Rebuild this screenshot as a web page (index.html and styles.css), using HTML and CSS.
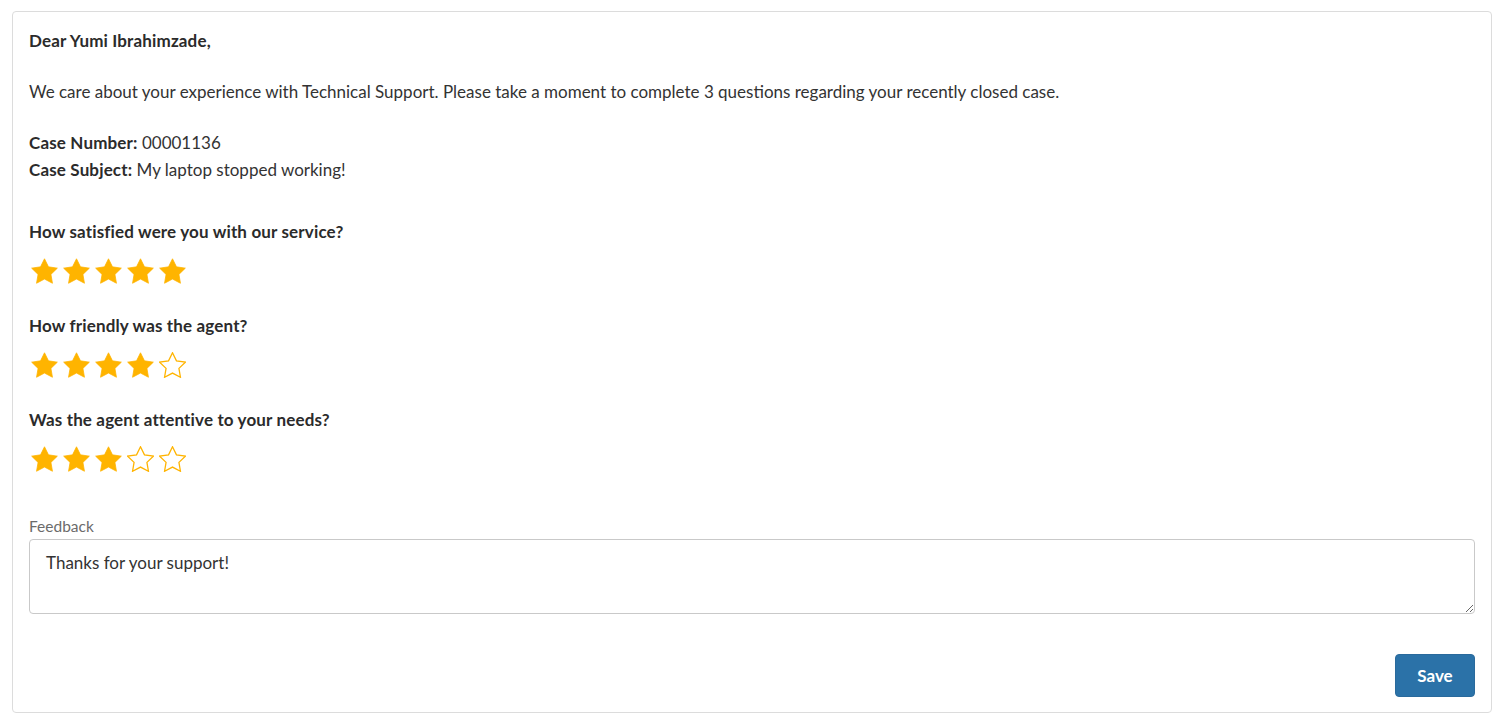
FILE: index.html
```html
<!DOCTYPE html>
<html lang="en">
<head>
<meta charset="utf-8">
<title>Survey</title>
<link rel="stylesheet" href="styles.css">
</head>
<body>
<div class="card">
  <p class="line greeting"><b>Dear Yumi Ibrahimzade,</b></p>
  <p class="line intro">We care about your experience with Technical Support. Please take a moment to complete 3 questions regarding your recently closed case.</p>
  <div class="case">
    <p class="line"><b>Case Number:</b> 00001136</p>
    <p class="line"><b>Case Subject:</b> My laptop stopped working!</p>
  </div>

  <div class="question first">
    <p class="line q"><b>How satisfied were you with our service?</b></p>
    <div class="stars">
      <svg class="star on" viewBox="1.5 1.5 21 20"><path d="M12 2l3.09 6.26L22 9.27l-5 4.87 1.18 6.88L12 17.770l-6.180 3.25L7 14.14 2 9.27l6.91-1.01L12 2z"/></svg>
      <svg class="star on" viewBox="1.5 1.5 21 20"><path d="M12 2l3.09 6.26L22 9.27l-5 4.87 1.18 6.88L12 17.77l-6.18 3.25L7 14.14 2 9.27l6.91-1.01L12 2z"/></svg>
      <svg class="star on" viewBox="1.5 1.5 21 20"><path d="M12 2l3.09 6.26L22 9.27l-5 4.87 1.18 6.88L12 17.77l-6.18 3.25L7 14.14 2 9.27l6.91-1.01L12 2z"/></svg>
      <svg class="star on" viewBox="1.5 1.5 21 20"><path d="M12 2l3.09 6.26L22 9.27l-5 4.87 1.18 6.88L12 17.77l-6.18 3.25L7 14.14 2 9.27l6.91-1.01L12 2z"/></svg>
      <svg class="star on" viewBox="1.5 1.5 21 20"><path d="M12 2l3.09 6.26L22 9.27l-5 4.87 1.18 6.88L12 17.77l-6.18 3.25L7 14.14 2 9.27l6.91-1.01L12 2z"/></svg>
    </div>
  </div>

  <div class="question">
    <p class="line q"><b>How friendly was the agent?</b></p>
    <div class="stars">
      <svg class="star on" viewBox="1.5 1.5 21 20"><path d="M12 2l3.09 6.26L22 9.27l-5 4.87 1.18 6.88L12 17.77l-6.18 3.25L7 14.14 2 9.27l6.91-1.01L12 2z"/></svg>
      <svg class="star on" viewBox="1.5 1.5 21 20"><path d="M12 2l3.09 6.26L22 9.27l-5 4.87 1.18 6.88L12 17.77l-6.18 3.25L7 14.14 2 9.27l6.91-1.01L12 2z"/></svg>
      <svg class="star on" viewBox="1.5 1.5 21 20"><path d="M12 2l3.09 6.26L22 9.27l-5 4.87 1.18 6.88L12 17.77l-6.18 3.25L7 14.14 2 9.27l6.91-1.01L12 2z"/></svg>
      <svg class="star on" viewBox="1.5 1.5 21 20"><path d="M12 2l3.09 6.26L22 9.27l-5 4.87 1.18 6.88L12 17.77l-6.18 3.25L7 14.14 2 9.27l6.91-1.01L12 2z"/></svg>
      <svg class="star off" viewBox="1.5 1.5 21 20"><path d="M12 2l3.09 6.26L22 9.27l-5 4.87 1.18 6.88L12 17.77l-6.18 3.25L7 14.14 2 9.27l6.91-1.01L12 2z"/></svg>
    </div>
  </div>

  <div class="question">
    <p class="line q"><b>Was the agent attentive to your needs?</b></p>
    <div class="stars">
      <svg class="star on" viewBox="1.5 1.5 21 20"><path d="M12 2l3.09 6.26L22 9.27l-5 4.87 1.18 6.88L12 17.77l-6.18 3.25L7 14.14 2 9.27l6.91-1.01L12 2z"/></svg>
      <svg class="star on" viewBox="1.5 1.5 21 20"><path d="M12 2l3.09 6.26L22 9.27l-5 4.87 1.18 6.88L12 17.77l-6.18 3.25L7 14.14 2 9.27l6.91-1.01L12 2z"/></svg>
      <svg class="star on" viewBox="1.5 1.5 21 20"><path d="M12 2l3.09 6.26L22 9.27l-5 4.87 1.18 6.88L12 17.77l-6.18 3.25L7 14.14 2 9.27l6.91-1.01L12 2z"/></svg>
      <svg class="star off" viewBox="1.5 1.5 21 20"><path d="M12 2l3.09 6.26L22 9.27l-5 4.87 1.18 6.88L12 17.77l-6.18 3.25L7 14.14 2 9.27l6.91-1.01L12 2z"/></svg>
      <svg class="star off" viewBox="1.5 1.5 21 20"><path d="M12 2l3.09 6.26L22 9.27l-5 4.87 1.18 6.88L12 17.77l-6.18 3.25L7 14.14 2 9.27l6.91-1.01L12 2z"/></svg>
    </div>
  </div>

  <div class="feedback">
    <label class="label" for="fb">Feedback</label>
    <textarea id="fb" class="textarea">Thanks for your support!</textarea>
  </div>

  <div class="actions">
    <button class="btn" type="button">Save</button>
  </div>
</div>
</body>
</html>
```

FILE: styles.css
```css
* { box-sizing: border-box; }
html, body { background: #fff; }
body {
  margin: 0;
  padding: 11px 8px 0 12px;
  font-family: Lato, "Open Sans", "Liberation Sans", sans-serif;
  font-size: 17px;
  color: #333333;
}
.card {
  width: 1480px;
  height: 702px;
  border: 1px solid #dcdcdc;
  border-radius: 4px;
  padding: 16px 16px 15px 16px;
  display: flex;
  flex-direction: column;
}
.line {
  margin: 0;
  line-height: 26px;
}
b { font-weight: 700; color: #2b2b2b; letter-spacing: 0.15px; }
.intro { margin-top: 25px; }
.case { margin-top: 25px; display: flex; flex-direction: column; gap: 1px; }
.question { margin-top: 29px; }
.question.first { margin-top: 36px; }
.stars {
  display: flex;
  gap: 5px;
  margin-top: 13px;
  padding-left: 2px;
  height: 26px;
  align-items: center;
}
.star {
  width: 27px;
  height: 26px;
  display: block;
}
.star.on path { fill: #ffb400; stroke: #ffb400; stroke-width: 0.6; stroke-linejoin: round; }
.star.off path { fill: #fff; stroke: #ffb400; stroke-width: 1; stroke-linejoin: miter; }
.feedback {
  margin-top: 44px;
  display: flex;
  flex-direction: column;
}
.label {
  font-size: 15.5px;
  line-height: 20px;
  color: #6b6b6b;
  height: 22px;
}
.textarea {
  margin-top: 1px;
  width: 100%;
  height: 75px;
  border: 1px solid #c9c9c9;
  border-radius: 4px;
  padding: 11px 16px;
  font-family: Lato, "Open Sans", "Liberation Sans", sans-serif;
  font-size: 17px;
  line-height: 24px;
  color: #333;
  resize: vertical;
  outline: none;
}
.actions {
  margin-top: auto;
  display: flex;
  justify-content: flex-end;
}
.btn {
  width: 80px;
  height: 43px;
  background: #2b72a8;
  color: #fff;
  border: 1px solid #2a6a9c;
  border-radius: 4px;
  font-family: Lato, "Open Sans", "Liberation Sans", sans-serif;
  font-size: 17px;
  font-weight: 700;
  padding: 0;
}
```
